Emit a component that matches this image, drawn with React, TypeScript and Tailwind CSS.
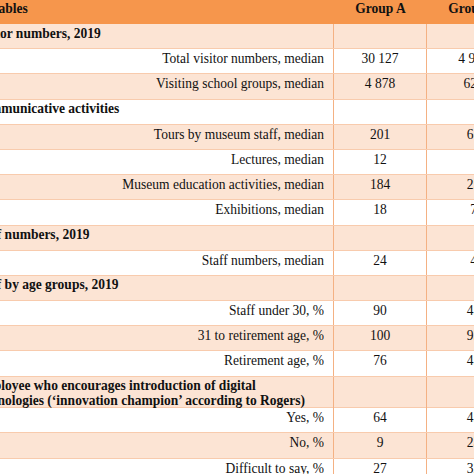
import React from "react";

type Row =
  | { kind: "section"; label: string[] }
  | { kind: "item"; label: string; a: string; b: string };

const rows: Row[] = [
  { kind: "section", label: ["Visitor numbers, 2019"] },
  { kind: "item", label: "Total visitor numbers, median", a: "30 127", b: "4 962" },
  { kind: "item", label: "Visiting school groups, median", a: "4 878", b: "623" },
  { kind: "section", label: ["Communicative activities"] },
  { kind: "item", label: "Tours by museum staff, median", a: "201", b: "61" },
  { kind: "item", label: "Lectures, median", a: "12", b: "" },
  { kind: "item", label: "Museum education activities, median", a: "184", b: "25" },
  { kind: "item", label: "Exhibitions, median", a: "18", b: "7" },
  { kind: "section", label: ["Staff numbers, 2019"] },
  { kind: "item", label: "Staff numbers, median", a: "24", b: "4" },
  { kind: "section", label: ["Staff by age groups, 2019"] },
  { kind: "item", label: "Staff under 30, %", a: "90", b: "45" },
  { kind: "item", label: "31 to retirement age, %", a: "100", b: "93" },
  { kind: "item", label: "Retirement age, %", a: "76", b: "45" },
  {
    kind: "section",
    label: [
      "Employee who encourages introduction of digital",
      "technologies (\u2018innovation champion\u2019 according to Rogers)",
    ],
  },
  { kind: "item", label: "Yes, %", a: "64", b: "45" },
  { kind: "item", label: "No, %", a: "9", b: "23" },
  { kind: "item", label: "Difficult to say, %", a: "27", b: "32" },
];

function T({ children }: { children: React.ReactNode }) {
  return <span className="inline-block scale-y-110">{children}</span>;
}

export default function App() {
  return (
    <div
      className="w-[474px] h-[474px] overflow-hidden bg-white text-[#111]"
      style={{ fontFamily: '"Liberation Serif", "Times New Roman", serif' }}
    >
      <div className="ml-[-33px] w-[553px] text-[13.5px]">
        <div className="grid grid-cols-[367px_93px_93px] h-[24px] bg-[#f6964c] font-bold leading-[16px]">
          <div className="pl-[6.5px] pt-[1px]">
            <T>Variables</T>
          </div>
          <div className="text-center pt-[1px]">
            <T>Group A</T>
          </div>
          <div className="text-center pt-[1px]">
            <T>Group B</T>
          </div>
        </div>
        {rows.map((r, i) => {
          const bg = i % 2 === 0 ? "bg-[#fce4d4]" : "bg-white";
          if (r.kind === "section") {
            const two = r.label.length > 1;
            return (
              <div
                key={i}
                className={`grid grid-cols-[367px_93px_93px] border-b border-[#f8cbad] ${bg} ${
                  two ? "h-[31.6px]" : "h-[25.2px]"
                }`}
              >
                <div
                  className={`pl-[6.5px] font-bold border-r border-[#f4b183] whitespace-nowrap ${
                    two ? "leading-[15px] pt-[1.5px]" : "leading-[16px] pt-[1.5px]"
                  }`}
                >
                  {r.label.map((l, j) => (
                    <div key={j}>
                      <T>{l}</T>
                    </div>
                  ))}
                </div>
                <div className="border-r border-[#f4b183]" />
                <div />
              </div>
            );
          }
          return (
            <div
              key={i}
              className={`grid grid-cols-[367px_93px_93px] h-[25.2px] border-b border-[#f8cbad] leading-[16px] ${bg}`}
            >
              <div className="text-right pr-[9px] pt-[2px] border-r border-[#f4b183] whitespace-nowrap">
                <T>{r.label}</T>
              </div>
              <div className="text-center pt-[2px] border-r border-[#f4b183]">
                <T>{r.a}</T>
              </div>
              <div className="text-center pt-[2px]">
                <T>{r.b}</T>
              </div>
            </div>
          );
        })}
      </div>
    </div>
  );
}
